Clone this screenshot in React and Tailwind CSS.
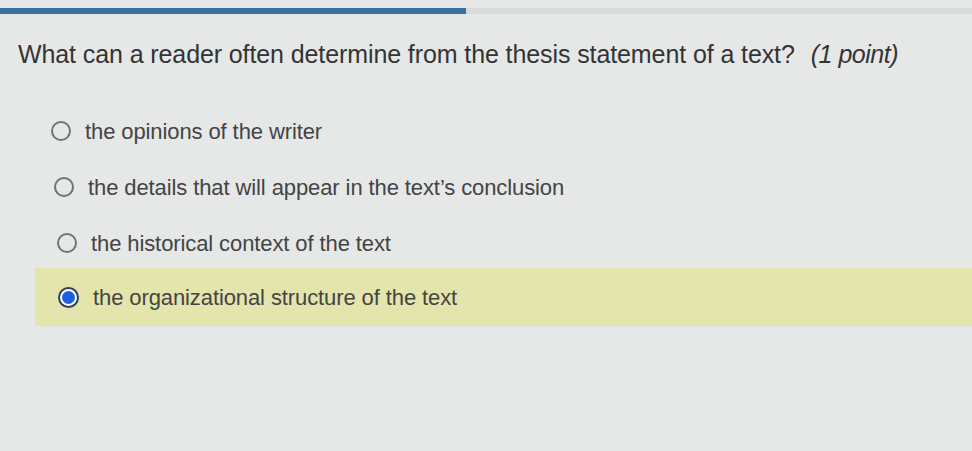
import { useState } from 'react';

const options = [
  'the opinions of the writer',
  'the details that will appear in the text\u2019s conclusion',
  'the historical context of the text',
  'the organizational structure of the text',
];

const indents = ['pl-[51px]', 'pl-[54px]', 'pl-[57px]', 'pl-[23px]'];

export default function App() {
  const [selected, setSelected] = useState(3);

  return (
    <div
      className="w-[972px] h-[451px] overflow-hidden bg-[#e6e8e7] text-[#3b3c3d]"
      style={{ fontFamily: '"Liberation Sans", Arial, sans-serif' }}
    >
      {/* Progress bar */}
      <div className="pt-[8px] flex">
        <div className="h-[6px] w-[466px] bg-[#3d6f9c]" />
        <div className="h-[6px] flex-1 bg-[#d9dcdc]" />
      </div>

      {/* Question */}
      <div className="pl-[18px] pt-[28px] flex items-baseline gap-[16px]">
        <h1 className="text-[25px] leading-none font-normal tracking-[-0.1px] text-[#333435]">
          What can a reader often determine from the thesis statement of a text?
        </h1>
        <span className="text-[25px] leading-none italic tracking-[-0.5px] text-[#333435]">(1 point)</span>
      </div>

      {/* Options */}
      <div className="mt-[36px] flex flex-col">
        {options.map((opt, i) => {
          const isSel = selected === i;
          return (
            <label
              key={opt}
              onClick={() => setSelected(i)}
              className={
                'flex items-center cursor-pointer ' +
                (isSel
                  ? 'ml-[35px] h-[58px] bg-[#e4e5ac] mt-[-3px]'
                  : 'h-[56px]') +
                ' ' + indents[i]
              }
            >
              {isSel ? (
                <span className="w-[21px] h-[21px] rounded-full border-[2px] border-[#2c3c66] bg-white flex items-center justify-center">
                  <span className="w-[13px] h-[13px] rounded-full bg-[#1e5fe2]" />
                </span>
              ) : (
                <span className="w-[20px] h-[20px] rounded-full border-[2px] border-[#707375]" />
              )}
              <span className="ml-[14px] text-[22px] text-[#434445] tracking-[-0.1px]">{opt}</span>
            </label>
          );
        })}
      </div>
    </div>
  );
}
